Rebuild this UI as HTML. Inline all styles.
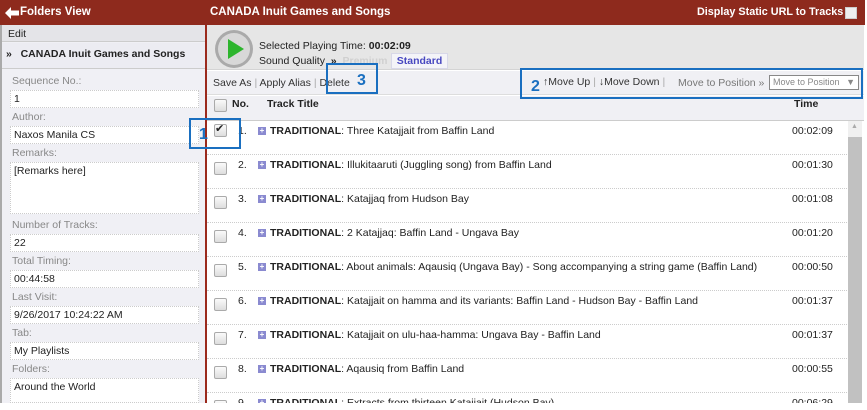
<!DOCTYPE html>
<html><head><meta charset="utf-8"><style>
*{margin:0;padding:0;box-sizing:border-box}
body{width:867px;height:410px;overflow:hidden;background:#fff;font-family:"Liberation Sans",Arial,sans-serif;font-size:10.5px;color:#222;position:relative}
.a{position:absolute;white-space:nowrap}
.hdr{left:0;top:0;width:865px;height:25px;background:#8e2a1d}
.hdr span{position:absolute;top:6px;color:#fff;font-weight:bold;font-size:11.5px}
.left{left:0;top:25px;width:206px;height:378px;background:#f0f0f5;border-left:2px solid #aaa}
.lbl{position:absolute;left:10px;color:#888;font-size:10.5px}
.inp{position:absolute;left:8px;width:189px;height:18px;background:#fff;border:1px dotted #ccc;padding:2px 3px;font-size:10.5px;color:#222}
.rows .r{position:absolute;left:0;width:640px;height:34px;border-bottom:1px dotted #ccc}
.cb{position:absolute;width:13px;height:13px;border:1px solid #aaa;border-radius:2px;background:linear-gradient(#fafafa,#ddd)}
.plus{position:absolute;width:8px;height:8px;background:#8a8ad0;color:#fff;font-size:8px;line-height:8px;text-align:center;font-weight:bold}
.box{position:absolute;border:2px solid #1a6fc0}
.num{position:absolute;color:#1a6fc0;font-weight:bold;font-size:16px}
</style></head><body>
<div class="a hdr">
 <svg class="a" style="left:5px;top:7px" width="14" height="12"><path d="M0 6 L6 0 L6 3.5 L14 3.5 L14 8.5 L6 8.5 L6 12 Z" fill="#fff"/></svg>
 <span style="left:20px">Folders View</span>
 <span style="left:210px">CANADA Inuit Games and Songs</span>
 <span style="left:697px;font-size:10.8px">Display Static URL to Tracks</span>
 <div class="a" style="left:845px;top:7px;width:12px;height:12px;background:#eee;border:1px solid #ccc"></div>
</div>
<div class="a left">
 <div class="a" style="left:0;top:0;width:204px;height:17px;background:#e4e4e8;border-bottom:1px solid #ccc"></div>
 <div class="a" style="left:6px;top:3px">Edit</div>
 <div class="a" style="left:0;top:18px;width:204px;height:26px;background:#ececf2;border-bottom:1px solid #ccc"></div>
 <div class="a" style="left:4px;top:23px;font-weight:bold">»&nbsp;&nbsp; CANADA Inuit Games and Songs</div>
 <div class="lbl" style="top:50px">Sequence No.:</div><div class="inp" style="top:65px">1</div>
 <div class="lbl" style="top:86px">Author:</div><div class="inp" style="top:101px">Naxos Manila CS</div>
 <div class="lbl" style="top:122px">Remarks:</div><div class="inp" style="top:137px;height:52px">[Remarks here]</div>
 <div class="lbl" style="top:194px">Number of Tracks:</div><div class="inp" style="top:209px">22</div>
 <div class="lbl" style="top:230px">Total Timing:</div><div class="inp" style="top:245px">00:44:58</div>
 <div class="lbl" style="top:266px">Last Visit:</div><div class="inp" style="top:281px">9/26/2017 10:24:22 AM</div>
 <div class="lbl" style="top:302px">Tab:</div><div class="inp" style="top:317px">My Playlists</div>
 <div class="lbl" style="top:338px">Folders:</div><div class="inp" style="top:353px;height:25px">Around the World</div>
</div>
<div class="a" style="left:205px;top:25px;width:2px;height:378px;background:#9b2a1d"></div>
<div class="a" style="left:207px;top:25px;width:657px;height:45px;background:#e6e6e6;border-bottom:1px solid #d4d4d4"></div>
<svg class="a" style="left:213px;top:29px" width="42" height="40"><circle cx="21" cy="20" r="19" fill="#aaa"/><circle cx="21" cy="20" r="16" fill="#d8d8d8"/><path d="M15 10 L31 20 L15 30 Z" fill="#2db52d"/></svg>
<div class="a" style="left:259px;top:40px">Selected Playing Time: <b>00:02:09</b></div>
<div class="a" style="left:259px;top:55px">Sound Quality &nbsp;<b>»</b> &nbsp;<span style="color:#d0d0d0;font-weight:bold">Premium</span></div>
<div class="a" style="left:391px;top:53px;width:57px;height:16px;border:1px solid #d8d8e8;background:#f4f4f8;color:#4848c0;font-weight:bold;text-align:center;line-height:14px">Standard</div>
<div class="a" style="left:207px;top:71px;width:657px;height:24px;background:#f0f0f4;border-bottom:1px solid #ddd"></div>
<div class="a" style="left:213px;top:77px;color:#333">Save As <span style="color:#aaa">|</span> Apply Alias <span style="color:#aaa">|</span> Delete</div>
<div class="a" style="left:543px;top:76px;color:#333">↑Move Up <span style="color:#aaa">|</span> ↓Move Down <span style="color:#aaa">|</span></div>
<div class="a" style="left:678px;top:77px;color:#777">Move to Position »</div>
<div class="a" style="left:769px;top:75px;width:90px;height:15px;border:1px solid #888;background:#fff;color:#888;font-size:9px;padding:1px 3px">Move to Position <span style="float:right">▼</span></div>
<div class="a" style="left:207px;top:96px;width:657px;height:25px;background:#f0f0f4;border-bottom:1px solid #ccc"></div>
<div class="cb" style="left:214px;top:99px"></div>
<div class="a" style="left:232px;top:98px;font-weight:bold">No.</div>
<div class="a" style="left:267px;top:98px;font-weight:bold">Track Title</div>
<div class="a" style="left:794px;top:98px;font-weight:bold">Time</div>
<div class="a rows" style="left:207px;top:121px;width:641px;height:282px;overflow:hidden">
 <div class="r" style="top:0"></div><div class="r" style="top:34px"></div><div class="r" style="top:68px"></div><div class="r" style="top:102px"></div><div class="r" style="top:136px"></div><div class="r" style="top:170px"></div><div class="r" style="top:204px"></div><div class="r" style="top:238px"></div><div class="r" style="top:272px"></div>
</div>
<div class="a" style="left:848px;top:121px;width:14px;height:282px;background:#f0f0f0"></div>
<div class="a" style="left:848px;top:137px;width:14px;height:266px;background:#c1c1c1"></div>
<div class="a" style="left:851px;top:123px;color:#aaa;font-size:7px">▲</div>

<div class="cb" style="left:214px;top:124px"></div><div class="a" style="left:215px;top:122px;font-size:11px">✔</div>
<div class="a" style="left:238px;top:125px">1.</div><div class="plus" style="left:258px;top:127px">+</div><div class="a" style="left:270px;top:125px"><b>TRADITIONAL</b>: Three Katajjait from Baffin Land</div><div class="a" style="left:792px;top:125px">00:02:09</div>
<div class="cb" style="left:214px;top:162px"></div><div class="a" style="left:238px;top:159px">2.</div><div class="plus" style="left:258px;top:161px">+</div><div class="a" style="left:270px;top:159px"><b>TRADITIONAL</b>: Illukitaaruti (Juggling song) from Baffin Land</div><div class="a" style="left:792px;top:159px">00:01:30</div>
<div class="cb" style="left:214px;top:196px"></div><div class="a" style="left:238px;top:193px">3.</div><div class="plus" style="left:258px;top:195px">+</div><div class="a" style="left:270px;top:193px"><b>TRADITIONAL</b>: Katajjaq from Hudson Bay</div><div class="a" style="left:792px;top:193px">00:01:08</div>
<div class="cb" style="left:214px;top:230px"></div><div class="a" style="left:238px;top:227px">4.</div><div class="plus" style="left:258px;top:229px">+</div><div class="a" style="left:270px;top:227px"><b>TRADITIONAL</b>: 2 Katajjaq: Baffin Land - Ungava Bay</div><div class="a" style="left:792px;top:227px">00:01:20</div>
<div class="cb" style="left:214px;top:264px"></div><div class="a" style="left:238px;top:261px">5.</div><div class="plus" style="left:258px;top:263px">+</div><div class="a" style="left:270px;top:261px"><b>TRADITIONAL</b>: About animals: Aqausiq (Ungava Bay) - Song accompanying a string game (Baffin Land)</div><div class="a" style="left:792px;top:261px">00:00:50</div>
<div class="cb" style="left:214px;top:298px"></div><div class="a" style="left:238px;top:295px">6.</div><div class="plus" style="left:258px;top:297px">+</div><div class="a" style="left:270px;top:295px"><b>TRADITIONAL</b>: Katajjait on hamma and its variants: Baffin Land - Hudson Bay - Baffin Land</div><div class="a" style="left:792px;top:295px">00:01:37</div>
<div class="cb" style="left:214px;top:332px"></div><div class="a" style="left:238px;top:329px">7.</div><div class="plus" style="left:258px;top:331px">+</div><div class="a" style="left:270px;top:329px"><b>TRADITIONAL</b>: Katajjait on ulu-haa-hamma: Ungava Bay - Baffin Land</div><div class="a" style="left:792px;top:329px">00:01:37</div>
<div class="cb" style="left:214px;top:366px"></div><div class="a" style="left:238px;top:363px">8.</div><div class="plus" style="left:258px;top:365px">+</div><div class="a" style="left:270px;top:363px"><b>TRADITIONAL</b>: Aqausiq from Baffin Land</div><div class="a" style="left:792px;top:363px">00:00:55</div>
<div class="a" style="left:207px;top:396px;width:641px;height:7px;overflow:hidden"><div class="cb" style="left:7px;top:4px"></div><div class="a" style="left:31px;top:1px">9.</div><div class="plus" style="left:51px;top:3px">+</div><div class="a" style="left:63px;top:1px"><b>TRADITIONAL</b>: Extracts from thirteen Katajjait (Hudson Bay)</div><div class="a" style="left:585px;top:1px">00:06:29</div></div>

<div class="box" style="left:189px;top:118px;width:52px;height:31px"></div><div class="num" style="left:199px;top:126px">1</div>
<div class="box" style="left:520px;top:68px;width:343px;height:31px"></div><div class="num" style="left:531px;top:78px">2</div>
<div class="box" style="left:326px;top:63px;width:52px;height:31px"></div><div class="num" style="left:357px;top:72px">3</div>
</body></html>
